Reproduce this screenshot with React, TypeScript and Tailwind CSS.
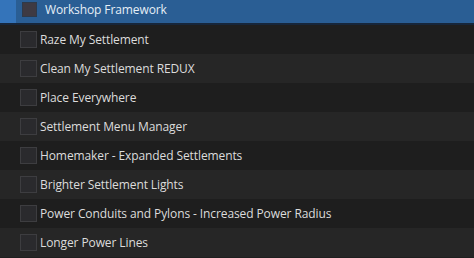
const mods = [
  "Raze My Settlement",
  "Clean My Settlement REDUX",
  "Place Everywhere",
  "Settlement Menu Manager",
  "Homemaker - Expanded Settlements",
  "Brighter Settlement Lights",
  "Power Conduits and Pylons - Increased Power Radius",
  "Longer Power Lines",
];

export default function App() {
  return (
    <div
      className="h-[258px] w-[474px] overflow-hidden bg-[#1f1f1f] text-[12px] tracking-[-0.1px] text-[#dcdcdc]"
      style={{ fontFamily: '"Open Sans", "Noto Sans", sans-serif' }}
    >
      <div className="-mt-[4px] flex h-[29px] items-center border-b-2 border-[#17263a] bg-[#2a5e94]">
        <div className="flex h-full w-[16px] bg-[#3474ba]" />
        <div className="ml-[6px] h-[15px] w-[15px] border border-[#2e3a4a] bg-[#3e3a42]" />
        <span className="ml-[8px] text-[#e6eef6]">Workshop Framework</span>
      </div>
      {mods.map((name, i) => (
        <div
          key={name}
          className={
            "flex h-[29px] items-center " +
            (i % 2 === 0 ? "bg-[#1e1e1e]" : "bg-[#262626]")
          }
        >
          <div className="ml-[20px] h-[17px] w-[17px] border border-[#3d3d40] bg-[#2a2a2d]" />
          <span className="ml-[3px]">{name}</span>
        </div>
      ))}
    </div>
  );
}
